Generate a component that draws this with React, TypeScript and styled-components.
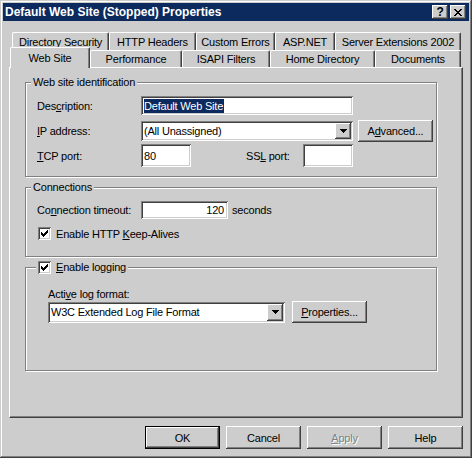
import React from "react";
import styled, { createGlobalStyle, css } from "styled-components";

const face = "#cdcdcd";
const hi = "#ffffff";
const shadow = "#808080";
const dark = "#404040";
const navy = "#0c2a5e";

const GlobalStyle = createGlobalStyle`
  html, body {
    margin: 0;
    padding: 0;
    background: ${face};
  }
  body {
    font-family: "Liberation Sans", Arial, sans-serif;
    font-size: 11px;
    letter-spacing: -0.2px;
    color: #000;
  }
`;

const raised = css`
  box-shadow: inset -1px -1px ${dark}, inset 1px 1px ${hi}, inset -2px -2px ${shadow};
`;

const sunken = css`
  box-shadow: inset 1px 1px ${shadow}, inset -1px -1px ${hi}, inset 2px 2px ${dark},
    inset -2px -2px ${face};
`;

const Window = styled.div`
  width: 472px;
  height: 458px;
  box-sizing: border-box;
  padding: 3px;
  background: ${face};
  box-shadow: inset -1px -1px ${dark}, inset 1px 1px ${face}, inset -2px -2px ${shadow},
    inset 2px 2px ${hi};
  display: flex;
  flex-direction: column;
`;

const TitleBar = styled.div`
  height: 18px;
  background: ${navy};
  display: flex;
  align-items: center;
  padding: 0 3px 0 2px;
  color: #fff;
`;

const TitleText = styled.div`
  flex: 1;
  font-weight: bold;
  font-size: 12px;
  letter-spacing: 0;
  white-space: nowrap;
`;

const CaptionButton = styled.div<{ $gap?: number }>`
  width: 16px;
  height: 14px;
  margin-left: ${({ $gap }) => $gap ?? 0}px;
  background: ${face};
  ${raised};
  display: flex;
  align-items: center;
  justify-content: center;
  color: #000;
  font-weight: bold;
  font-size: 12px;
  line-height: 14px;
`;

const Body = styled.div`
  padding: 11px 6px 0;
  display: flex;
  flex-direction: column;
`;

const TabRow = styled.div<{ $indent: number; $h: number; $front?: boolean }>`
  display: flex;
  align-items: flex-end;
  height: ${({ $h }) => $h}px;
  padding-left: ${({ $indent }) => $indent}px;
  position: relative;
  z-index: ${({ $front }) => ($front ? 2 : 1)};
`;

const Tab = styled.div<{ $w: number; $h: number; $active?: boolean }>`
  width: ${({ $w }) => $w}px;
  height: ${({ $h, $active }) => ($active ? $h + 4 : $h)}px;
  margin-bottom: ${({ $active }) => ($active ? -1 : 0)}px;
  box-sizing: border-box;
  flex: none;
  background: ${face};
  border-top: 1px solid ${hi};
  border-left: 1px solid ${hi};
  border-right: 1px solid ${dark};
  border-radius: 2px 2px 0 0;
  box-shadow: inset -1px 0 ${shadow};
  display: flex;
  align-items: center;
  justify-content: center;
  white-space: nowrap;
  position: relative;
  z-index: ${({ $active }) => ($active ? 3 : 1)};
`;

const Panel = styled.div`
  height: 351px;
  box-sizing: border-box;
  background: ${face};
  border-top: 1px solid ${hi};
  border-left: 1px solid ${hi};
  border-right: 1px solid ${dark};
  border-bottom: 1px solid ${dark};
  box-shadow: inset -1px -1px ${shadow};
  padding: 14px 0 0 15px;
  display: flex;
  flex-direction: column;
  gap: 10px;
`;

const Group = styled.div<{ $h: number; $pad: string }>`
  position: relative;
  width: 412px;
  height: ${({ $h }) => $h}px;
  box-sizing: border-box;
  border: 1px solid ${shadow};
  box-shadow: inset 1px 1px ${hi}, 1px 1px 0 ${hi};
  padding: ${({ $pad }) => $pad};
  display: flex;
  flex-direction: column;
`;

const Caption = styled.div<{ $left: number }>`
  position: absolute;
  top: -7px;
  left: ${({ $left }) => $left}px;
  height: 13px;
  line-height: 13px;
  padding: 0 2px;
  background: ${face};
  display: flex;
  align-items: center;
  gap: 5px;
`;

const Row = styled.div<{ $h: number; $mt?: number }>`
  display: flex;
  align-items: center;
  height: ${({ $h }) => $h}px;
  margin-top: ${({ $mt }) => $mt ?? 0}px;
`;

const Label = styled.div<{ $w?: number; $ml?: number }>`
  width: ${({ $w }) => ($w ? `${$w}px` : "auto")};
  margin-left: ${({ $ml }) => $ml ?? 0}px;
  flex: none;
  white-space: nowrap;
`;

const Field = styled.div<{ $w: number; $h: number; $right?: boolean }>`
  width: ${({ $w }) => $w}px;
  height: ${({ $h }) => $h}px;
  box-sizing: border-box;
  background: #fff;
  ${sunken};
  padding: 2px 4px 2px 3px;
  display: flex;
  align-items: center;
  justify-content: ${({ $right }) => ($right ? "flex-end" : "flex-start")};
  flex: none;
  white-space: nowrap;
`;

const Selected = styled.span`
  background: ${navy};
  color: #fff;
  line-height: 14px;
  padding: 0 1px 0 0;
`;

const Combo = styled.div<{ $w: number; $h: number }>`
  width: ${({ $w }) => $w}px;
  height: ${({ $h }) => $h}px;
  box-sizing: border-box;
  background: #fff;
  ${sunken};
  padding: 2px 2px 2px 3px;
  display: flex;
  align-items: center;
  flex: none;
`;

const ComboText = styled.div`
  flex: 1;
  white-space: nowrap;
`;

const DropButton = styled.div`
  width: 16px;
  align-self: stretch;
  background: ${face};
  ${raised};
  display: flex;
  align-items: center;
  justify-content: center;
`;

const Button = styled.div<{ $default?: boolean; $disabled?: boolean; $ml?: number; $h?: number }>`
  width: 75px;
  height: ${({ $h }) => $h ?? 23}px;
  margin-left: ${({ $ml }) => $ml ?? 0}px;
  box-sizing: border-box;
  flex: none;
  background: ${face};
  display: flex;
  align-items: center;
  justify-content: center;
  white-space: nowrap;
  color: ${({ $disabled }) => ($disabled ? shadow : "#000")};
  text-shadow: ${({ $disabled }) => ($disabled ? `1px 1px 0 ${hi}` : "none")};
  ${({ $default }) =>
    $default
      ? css`
          box-shadow: inset 0 0 0 1px #000, inset -2px -2px ${dark}, inset 2px 2px ${hi},
            inset -3px -3px ${shadow};
        `
      : raised};
`;

const CheckBox = styled.div`
  width: 13px;
  height: 13px;
  box-sizing: border-box;
  background: #fff;
  ${sunken};
  flex: none;
  display: flex;
  align-items: center;
  justify-content: center;
`;

const CheckRow = styled.div<{ $mt?: number }>`
  display: flex;
  align-items: center;
  gap: 5px;
  height: 13px;
  margin-top: ${({ $mt }) => $mt ?? 0}px;
  margin-left: 1px;
`;

const ButtonBar = styled.div`
  display: flex;
  justify-content: flex-end;
  gap: 6px;
  margin-top: 8px;
`;

const Check = () => (
  <CheckBox>
    <svg width="7" height="7" viewBox="0 0 7 7" shapeRendering="crispEdges">
      <path d="M0 2h1v3H0zM1 3h1v3H1zM2 4h1v3H2zM3 3h1v3H3zM4 2h1v3H4zM5 1h1v3H5zM6 0h1v3H6z" fill="#000" />
    </svg>
  </CheckBox>
);

const Arrow = () => (
  <svg width="7" height="4" viewBox="0 0 7 4" shapeRendering="crispEdges">
    <path d="M0 0h7v1H0zM1 1h5v1H1zM2 2h3v1H2zM3 3h1v1H3z" fill="#000" />
  </svg>
);

const backTabs: [string, number][] = [
  ["Directory Security", 97],
  ["HTTP Headers", 87],
  ["Custom Errors", 79],
  ["ASP.NET", 60],
  ["Server Extensions 2002", 126],
];

const frontTabs: [string, number][] = [
  ["Web Site", 80],
  ["Performance", 92],
  ["ISAPI Filters", 88],
  ["Home Directory", 105],
  ["Documents", 86],
];

export default function App() {
  return (
    <>
      <GlobalStyle />
      <Window>
        <TitleBar>
          <TitleText>Default Web Site (Stopped) Properties</TitleText>
          <CaptionButton>?</CaptionButton>
          <CaptionButton $gap={2}>
            <svg width="8" height="7" viewBox="0 0 8 7" shapeRendering="crispEdges">
              <path
                d="M0 0h2v1H0zM6 0h2v1H6zM1 1h2v1H1zM5 1h2v1H5zM2 2h4v1H2zM3 3h2v1H3zM2 4h4v1H2zM1 5h2v1H1zM5 5h2v1H5zM0 6h2v1H0zM6 6h2v1H6z"
                fill="#000"
              />
            </svg>
          </CaptionButton>
        </TitleBar>

        <Body>
          <TabRow $indent={3} $h={18}>
            {backTabs.map(([name, w]) => (
              <Tab key={name} $w={w} $h={18}>
                {name}
              </Tab>
            ))}
          </TabRow>
          <TabRow $indent={1} $h={17} $front>
            {frontTabs.map(([name, w], i) => (
              <Tab key={name} $w={w} $h={17} $active={i === 0}>
                {name}
              </Tab>
            ))}
          </TabRow>

          <Panel>
            <Group $h={95} $pad="13px 0 0 11px">
              <Caption $left={5}>Web site identification</Caption>
              <Row $h={19}>
                <Label $w={104}>
                  Des<u>c</u>ription:
                </Label>
                <Field $w={212} $h={19}>
                  <Selected>Default Web Site</Selected>
                </Field>
              </Row>
              <Row $h={22} $mt={5}>
                <Label $w={104}>
                  <u>I</u>P address:
                </Label>
                <Combo $w={212} $h={20}>
                  <ComboText>(All Unassigned)</ComboText>
                  <DropButton>
                    <Arrow />
                  </DropButton>
                </Combo>
                <Button $ml={5} $h={22}>
                  A<u>d</u>vanced...
                </Button>
              </Row>
              <Row $h={23} $mt={2}>
                <Label $w={104}>
                  <u>T</u>CP port:
                </Label>
                <Field $w={50} $h={23}>
                  80
                </Field>
                <Label $w={57} $ml={55}>
                  SS<u>L</u> port:
                </Label>
                <Field $w={50} $h={23} />
              </Row>
            </Group>

            <Group $h={70} $pad="13px 0 0 11px">
              <Caption $left={5}>Connections</Caption>
              <Row $h={18}>
                <Label $w={104}>
                  Co<u>n</u>nection timeout:
                </Label>
                <Field $w={87} $h={18} $right>
                  120
                </Field>
                <Label $ml={4}>seconds</Label>
              </Row>
              <CheckRow $mt={8}>
                <Check />
                <span>
                  Enable HTTP <u>K</u>eep-Alives
                </span>
              </CheckRow>
            </Group>

            <Group $h={104} $pad="19px 0 0 22px">
              <Caption $left={10}>
                <Check />
                <span>
                  <u>E</u>nable logging
                </span>
              </Caption>
              <Row $h={13}>
                <Label>
                  Acti<u>v</u>e log format:
                </Label>
              </Row>
              <Row $h={22} $mt={1}>
                <Combo $w={237} $h={21}>
                  <ComboText>W3C Extended Log File Format</ComboText>
                  <DropButton>
                    <Arrow />
                  </DropButton>
                </Combo>
                <Button $ml={7} $h={22}>
                  <u>P</u>roperties...
                </Button>
              </Row>
            </Group>
          </Panel>

          <ButtonBar>
            <Button $default>OK</Button>
            <Button>Cancel</Button>
            <Button $disabled>
              <u>A</u>pply
            </Button>
            <Button>Help</Button>
          </ButtonBar>
        </Body>
      </Window>
    </>
  );
}
